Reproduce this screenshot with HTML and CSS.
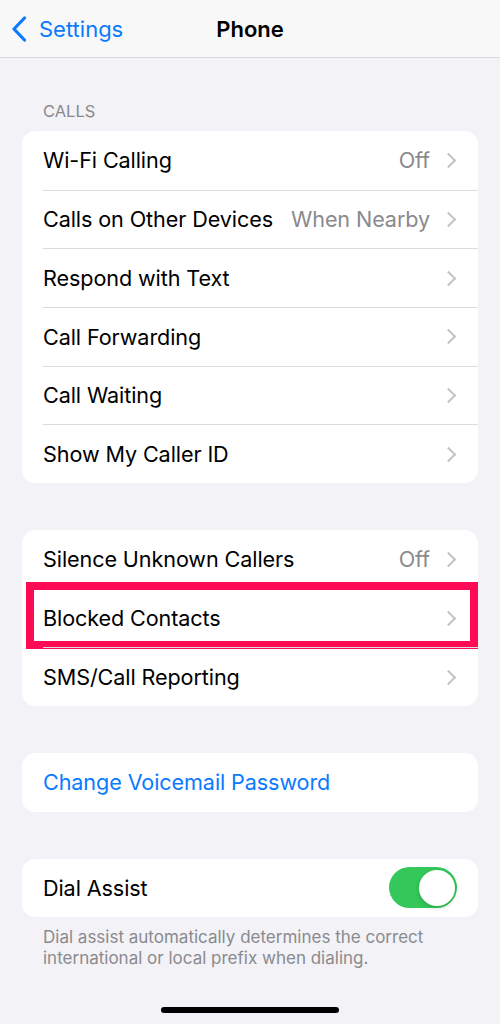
FILE: index.html
```html
<!DOCTYPE html>
<html lang="en">
<head>
  <meta charset="UTF-8">
  <meta name="viewport" content="width=device-width, initial-scale=1.0">
  <title>Phone</title>
  <link rel="stylesheet" href="styles.css">
</head>
<body>
  <header class="navbar">
    <a class="back" href="#">
      <svg class="back-icon" width="16" height="26" viewBox="0 0 16 26" aria-hidden="true">
        <path d="M13.5 2 L3 13 L13.5 24" fill="none" stroke="currentColor" stroke-width="3.2" stroke-linecap="round" stroke-linejoin="round"/>
      </svg>
      <span>Settings</span>
    </a>
    <h1 class="title">Phone</h1>
  </header>

  <main class="content">
    <h2 class="group-label">CALLS</h2>
    <ul class="group">
      <li class="row"><span class="label">Wi-Fi Calling</span><span class="value">Off</span><span class="chev"></span></li>
      <li class="row"><span class="label">Calls on Other Devices</span><span class="value">When Nearby</span><span class="chev"></span></li>
      <li class="row"><span class="label">Respond with Text</span><span class="chev"></span></li>
      <li class="row"><span class="label">Call Forwarding</span><span class="chev"></span></li>
      <li class="row"><span class="label">Call Waiting</span><span class="chev"></span></li>
      <li class="row"><span class="label">Show My Caller ID</span><span class="chev"></span></li>
    </ul>

    <ul class="group">
      <li class="row"><span class="label">Silence Unknown Callers</span><span class="value">Off</span><span class="chev"></span></li>
      <li class="row highlighted"><span class="label">Blocked Contacts</span><span class="chev"></span></li>
      <li class="row"><span class="label">SMS/Call Reporting</span><span class="chev"></span></li>
    </ul>

    <ul class="group">
      <li class="row"><span class="label link">Change Voicemail Password</span></li>
    </ul>

    <ul class="group">
      <li class="row"><span class="label">Dial Assist</span><span class="toggle on"><span class="knob"></span></span></li>
    </ul>
    <p class="group-footer">Dial assist automatically determines the correct international or local prefix when dialing.</p>
  </main>

  <div class="home-indicator"></div>
</body>
</html>
```

FILE: styles.css
```css
/* Base */
body {
  margin: 0;
  background: #f2f2f7;
  font-family: Inter, "Noto Sans", sans-serif;
  color: #000;
  width: 500px;
  height: 1024px;
  overflow: hidden;
  position: relative;
}

/* Navigation bar */
.navbar {
  height: 58px;
  background: #f8f8f9;
  border-bottom: 1px solid #d9d9dc;
  box-sizing: border-box;
  display: flex;
  align-items: center;
  justify-content: center;
  position: relative;
}
.back {
  position: absolute;
  left: 11px;
  top: 0;
  bottom: 0;
  display: flex;
  align-items: center;
  gap: 12px;
  color: #0a7aff;
  text-decoration: none;
  font-size: 22px;
}
.title {
  margin: 0;
  font-size: 22px;
  font-weight: 600;
}

/* Grouped list */
.content {
  padding: 43px 22px 0;
}
.group-label {
  margin: 0 0 10px 21px;
  font-size: 16.5px;
  line-height: 20px;
  font-weight: 400;
  color: #8a8a8e;
}
.group {
  list-style: none;
  margin: 0 0 47px;
  padding: 0 0 0 21px;
  background: #fff;
  border-radius: 13px;
}
.row {
  height: 58.67px;
  display: flex;
  align-items: center;
  padding-right: 22px;
  font-size: 21.6px;
  letter-spacing: -0.1px;
  position: relative;
}
.row + .row {
  border-top: 1px solid #dcdce0;
  box-sizing: border-box;
}
.label {
  flex: 1;
  white-space: nowrap;
}
.link {
  color: #0a7aff;
}
.value {
  color: #8a8a8e;
  margin-right: 13px;
}
.chev {
  width: 9px;
  height: 9px;
  border-top: 2.6px solid #c4c4c7;
  border-right: 2.6px solid #c4c4c7;
  transform: rotate(45deg);
  margin-right: 2px;
}

/* Red annotation frame */
.row.highlighted {
  border-top-color: transparent;
}
.highlighted::after {
  content: "";
  position: absolute;
  left: -17px;
  right: 0;
  top: -8px;
  bottom: -2px;
  border: 8px solid #ff0a54;
}

/* Toggle switch */
.toggle {
  width: 68px;
  height: 41px;
  border-radius: 21px;
  background: #e9e9eb;
  display: flex;
  align-items: center;
  padding: 2.5px;
  box-sizing: border-box;
  margin-right: -1px;
}
.toggle.on {
  background: #34c759;
  justify-content: flex-end;
}
.knob {
  width: 36px;
  height: 36px;
  border-radius: 50%;
  background: #fff;
  box-shadow: 0 2px 5px rgba(0, 0, 0, 0.15);
}

.group-footer {
  margin: -37px 0 0 21px;
  font-size: 17px;
  line-height: 21px;
  color: #8a8a8e;
}

.home-indicator {
  position: absolute;
  left: 161px;
  bottom: 11px;
  width: 178px;
  height: 6.5px;
  border-radius: 4px;
  background: #000;
}
```
